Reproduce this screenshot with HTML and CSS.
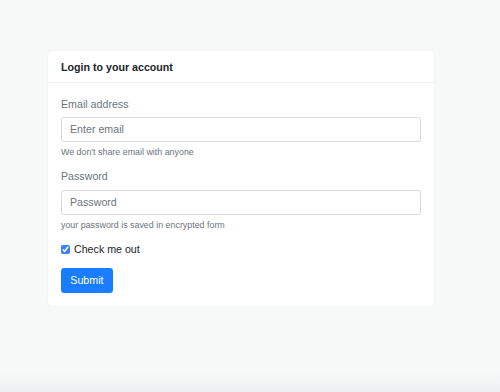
FILE: index.html
```html
<!DOCTYPE html>
<html lang="en">
<head>
<meta charset="utf-8">
<title>Login</title>
<link rel="stylesheet" href="styles.css">
</head>
<body>
<main class="page">
  <section class="card">
    <header class="card-header">Login to your account</header>
    <form class="card-body">
      <div class="form-group">
        <label class="label" for="email">Email address</label>
        <input class="input" id="email" type="email" placeholder="Enter email">
        <small class="help">We don't share email with anyone</small>
      </div>
      <div class="form-group">
        <label class="label" for="pwd">Password</label>
        <input class="input" id="pwd" type="password" placeholder="Password">
        <small class="help">your password is saved in encrypted form</small>
      </div>
      <div class="form-group check">
        <input class="checkbox" id="chk" type="checkbox" checked>
        <label class="check-label" for="chk">Check me out</label>
      </div>
      <button class="btn" type="button">Submit</button>
    </form>
  </section>
</main>
</body>
</html>
```
FILE: styles.css
```css
html, body {
  margin: 0;
  padding: 0;
}
body {
  background: #f7f8f8;
  font-family: "Liberation Sans", Arial, sans-serif;
  font-size: 10.67px;
  line-height: 1.5;
  color: #212529;
  min-height: 392px;
  background-image: linear-gradient(to bottom, #f7f8f8 0, #f7f8f8 372px, #eeeff0 392px);
}
.page {
  padding: 51px 0 0 48px;
}
.card {
  width: 386px;
  background: #fff;
  border-radius: 4px;
  box-shadow: 0 0 2px rgba(0, 0, 0, 0.06);
}
.card-header {
  padding: 7.5px 13px 7px;
  font-weight: bold;
  border-bottom: 1px solid #eef0f1;
  color: #212529;
}
.card-body {
  display: flex;
  flex-direction: column;
  align-items: flex-start;
  padding: 13px 13px 13px 13px;
}
.form-group {
  display: flex;
  flex-direction: column;
  align-self: stretch;
  margin-bottom: 9.3px;
}
.label {
  color: #6c757d;
  margin-bottom: 5.33px;
}
.input {
  box-sizing: border-box;
  height: 25px;
  width: 100%;
  margin: 0;
  padding: 0 8px;
  border: 1px solid #d5d8dc;
  border-radius: 2.7px;
  font: inherit;
  font-size: 10.67px;
  color: #495057;
  background: #fff;
}
.input::placeholder {
  color: #6c757d;
  opacity: 1;
}
.help {
  margin-top: 4px;
  font-size: 8.9px;
  color: #6c757d;
}
.check {
  flex-direction: row;
  align-items: center;
  height: 16px;
  margin-bottom: 10.5px;
}
.checkbox {
  width: 9px;
  height: 9px;
  margin: 0 4px 0 0;
  accent-color: #3b82f6;
}
.check-label {
  color: #212529;
}
.btn {
  height: 25px;
  padding: 0 8.3px;
  border: 1px solid #1a7cff;
  border-radius: 2.7px;
  background: #1a7cff;
  color: #fff;
  font: inherit;
  font-size: 10.67px;
}
```
